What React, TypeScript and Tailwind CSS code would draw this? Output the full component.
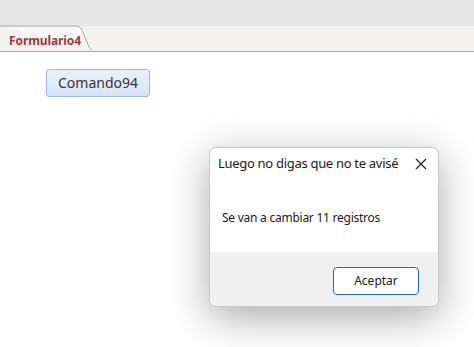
import React from "react";

const font = { fontFamily: '"Segoe UI", "Noto Sans", sans-serif' };

function TabOutline() {
  return (
    <svg className="absolute inset-0" width="92" height="26" viewBox="0 0 92 26">
      <path d="M0 1 H76 Q80 1 82 5 L89 22 Q91 25 94 25" fill="#f7f7f7" stroke="#a8a8a8" strokeWidth="1" />
    </svg>
  );
}

export default function App() {
  return (
    <div className="w-[474px] h-[347px] bg-white overflow-hidden relative" style={font}>
      <div className="h-[26px] bg-[#e6e6e6]" />
      <div className="h-[26px] bg-[#f3f2f1] border-b border-[#a6a6a6] flex items-end">
        <div className="relative w-[92px] h-[26px]">
          <TabOutline />
          <span className="relative block pl-[9px] pt-[8px] text-[12px] font-bold text-[#a4373a] leading-[16px] tracking-[-0.1px]">
            Formulario4
          </span>
        </div>
      </div>

      <div className="pl-[46px] pt-[17px]">
        <button className="w-[104px] h-[28px] rounded-[3px] border border-[#9fb8df] bg-gradient-to-b from-[#eaf1fc] to-[#d6e3f7] text-[14px] text-[#333] leading-none">
          Comando94
        </button>
      </div>

      <div className="absolute left-[209px] top-[147px] w-[230px] h-[160px] rounded-[7px] border border-[#c8c8c8] bg-white shadow-[0_10px_40px_rgba(0,0,0,0.34)] overflow-hidden flex flex-col">
        <div className="h-[30px] flex items-center justify-between pl-[8px] pr-[11px] pt-[2px]">
          <span className="text-[13px] text-[#1a1a1a] tracking-[-0.3px]">Luego no digas que no te avisé</span>
          <svg width="12" height="12" viewBox="0 0 12 12">
            <path d="M1 1 L11 11 M11 1 L1 11" stroke="#222" strokeWidth="1.2" />
          </svg>
        </div>
        <div className="flex-1 pl-[12px] pt-[31px] text-[12px] text-[#1a1a1a] tracking-[-0.25px]">
          Se van a cambiar 11 registros
        </div>
        <div className="h-[54px] bg-[#f0f0f0] flex items-start justify-end pr-[19px] pt-[15px]">
          <button className="w-[86px] h-[28px] rounded-[4px] border border-[#1a6fc4] bg-white text-[12px] text-[#1a1a1a]">
            Aceptar
          </button>
        </div>
      </div>
    </div>
  );
}
